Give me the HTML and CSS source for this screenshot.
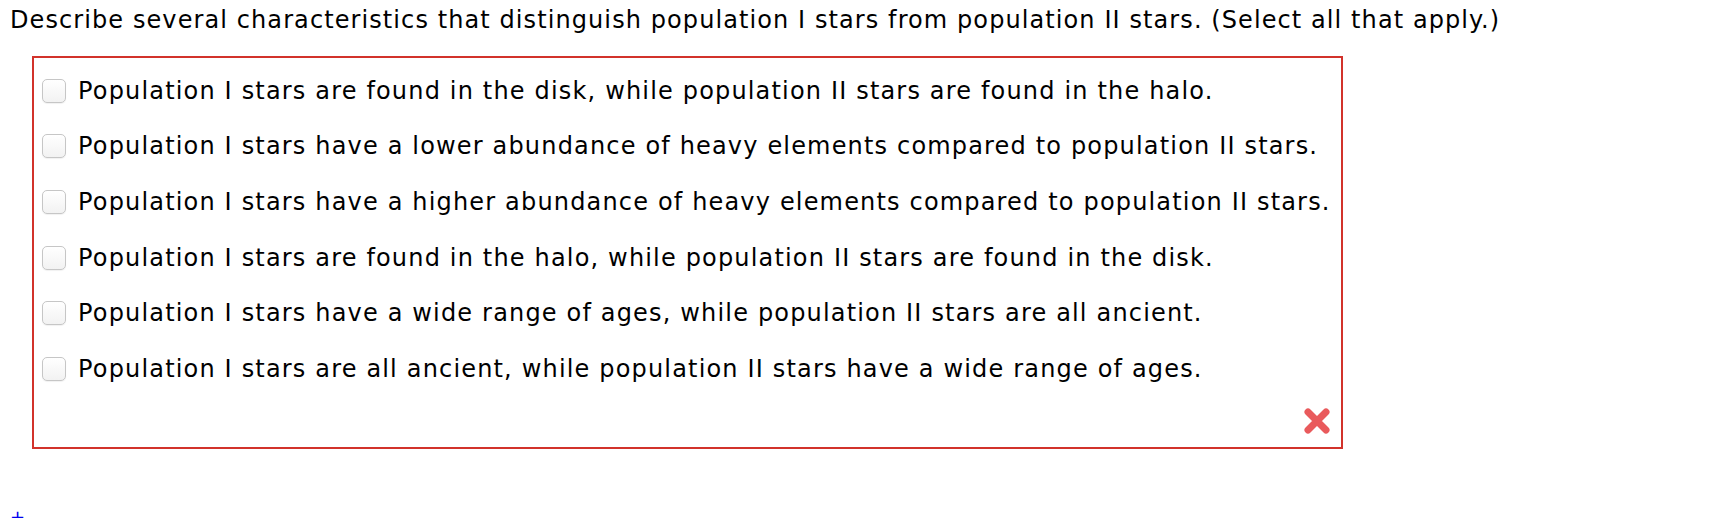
FILE: index.html
```html
<!DOCTYPE html>
<html lang="en">
<head>
<meta charset="utf-8">
<title>Question</title>
<link rel="stylesheet" href="styles.css">
</head>
<body>
<div class="question">
  <p class="prompt">Describe several characteristics that distinguish population I stars from population II stars. (Select all that apply.)</p>
  <div class="answer-box">
    <ul class="options">
      <li class="option"><span class="checkbox"></span><span class="label">Population I stars are found in the disk, while population II stars are found in the halo.</span></li>
      <li class="option"><span class="checkbox"></span><span class="label">Population I stars have a lower abundance of heavy elements compared to population II stars.</span></li>
      <li class="option"><span class="checkbox"></span><span class="label">Population I stars have a higher abundance of heavy elements compared to population II stars.</span></li>
      <li class="option"><span class="checkbox"></span><span class="label">Population I stars are found in the halo, while population II stars are found in the disk.</span></li>
      <li class="option"><span class="checkbox"></span><span class="label">Population I stars have a wide range of ages, while population II stars are all ancient.</span></li>
      <li class="option"><span class="checkbox"></span><span class="label">Population I stars are all ancient, while population II stars have a wide range of ages.</span></li>
    </ul>
    <div class="box-footer">
      <svg class="wrong-icon" width="28" height="28" viewBox="0 0 28 28" aria-label="incorrect">
        <path d="M5 5 L23 23 M23 5 L5 23" stroke="#e95a5c" stroke-width="7" stroke-linecap="round" fill="none"/>
      </svg>
    </div>
  </div>
  <div class="more"><a class="more-link" href="#">+</a></div>
</div>
</body>
</html>
```
FILE: styles.css
```css
html, body {
  margin: 0;
  padding: 0;
  background: #ffffff;
}
body {
  font-family: "DejaVu Sans", Verdana, sans-serif;
  color: #000000;
  overflow: hidden;
  height: 518px;
}
.question {
  padding-left: 10px;
}
.prompt {
  margin: 0;
  padding-top: 5px;
  font-size: 24px;
  line-height: 30px;
  letter-spacing: 1.09px;
}
.answer-box {
  margin: 21px 0 0 22px;
  width: 1307px;
  height: 389px;
  border: 2px solid #d2322b;
  display: flex;
  flex-direction: column;
}
.options {
  list-style: none;
  margin: 0;
  padding: 5px 0 0 8px;
}
.option {
  display: flex;
  align-items: center;
  height: 55.6px;
}
.checkbox {
  width: 22px;
  height: 22px;
  border: 1px solid #c6c6c6;
  border-radius: 5px;
  background: linear-gradient(#ffffff, #f2f2f2);
  box-shadow: 0 1px 1px rgba(0,0,0,0.06);
  flex: none;
}
.label {
  margin-left: 12px;
  font-size: 24px;
  line-height: 30px;
  letter-spacing: 1.17px;
}
.box-footer {
  flex: 1;
  display: flex;
  justify-content: flex-end;
  align-items: flex-start;
  padding: 10px 10px 0 0;
}
.wrong-icon {
  display: block;
  filter: blur(0.5px);
}
.more {
  margin-top: 59px;
}
.more-link {
  color: #0000ee;
  font-size: 18px;
  line-height: 18px;
  text-decoration: none;
  display: inline-block;
}
```
